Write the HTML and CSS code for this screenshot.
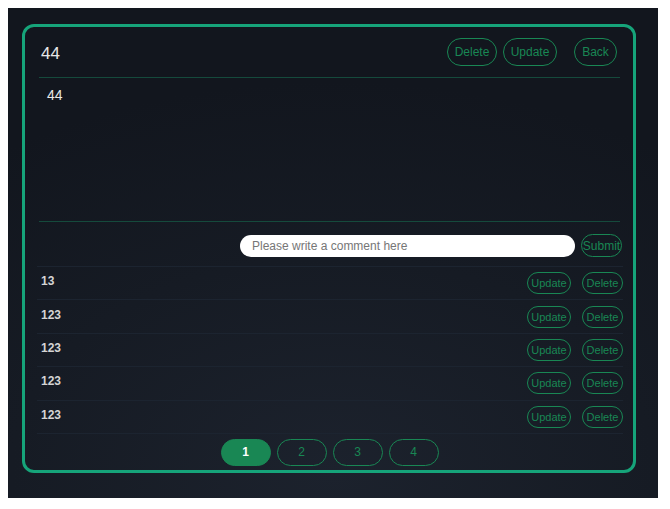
FILE: index.html
```html
<!DOCTYPE html>
<html>
<head>
<meta charset="utf-8">
<link rel="stylesheet" href="styles.css">
</head>
<body>
<div class="page">
  <div class="card">
    <div class="header">
      <h1 class="title">44</h1>
      <div class="actions">
        <button class="btn btn-delete">Delete</button>
        <button class="btn btn-update">Update</button>
        <button class="btn btn-back">Back</button>
      </div>
    </div>
    <div class="content">44</div>
    <form class="comment-form">
      <input class="comment-input" type="text" placeholder="Please write a comment here">
      <button type="button" class="btn btn-submit">Submit</button>
    </form>
    <ul class="comments">
      <li class="comment"><span class="comment-text">13</span><span class="row-actions"><button class="btn btn-sm btn-upd">Update</button><button class="btn btn-sm btn-del">Delete</button></span></li>
      <li class="comment"><span class="comment-text">123</span><span class="row-actions"><button class="btn btn-sm btn-upd">Update</button><button class="btn btn-sm btn-del">Delete</button></span></li>
      <li class="comment"><span class="comment-text">123</span><span class="row-actions"><button class="btn btn-sm btn-upd">Update</button><button class="btn btn-sm btn-del">Delete</button></span></li>
      <li class="comment"><span class="comment-text">123</span><span class="row-actions"><button class="btn btn-sm btn-upd">Update</button><button class="btn btn-sm btn-del">Delete</button></span></li>
      <li class="comment"><span class="comment-text">123</span><span class="row-actions"><button class="btn btn-sm btn-upd">Update</button><button class="btn btn-sm btn-del">Delete</button></span></li>
    </ul>
    <div class="pagination">
      <button class="page-btn active">1</button>
      <button class="page-btn">2</button>
      <button class="page-btn">3</button>
      <button class="page-btn">4</button>
    </div>
  </div>
</div>
</body>
</html>
```
FILE: styles.css
```css
html, body {
  margin: 0;
  padding: 0;
  background: #ffffff;
}
body {
  padding: 8px;
  font-family: "Liberation Sans", Arial, sans-serif;
}
.page {
  width: 650px;
  height: 490px;
  box-sizing: border-box;
  padding: 16px 0 0 14px;
  background: radial-gradient(ellipse 90% 80% at 50% 95%, #1c222d 0%, #161b24 55%, #12161e 100%);
}
.card {
  width: 614px;
  box-sizing: border-box;
  border: 3px solid #16a47a;
  border-radius: 12px;
  padding: 11px 13px 4px 14px;
}
.header {
  display: flex;
  justify-content: space-between;
  align-items: center;
  height: 28px;
  padding-bottom: 11px;
  border-bottom: 1px solid #154a3c;
}
.title {
  margin: 3px 0 0 2px;
  font-size: 17px;
  font-weight: normal;
  color: #e8e8e8;
}
.actions {
  display: flex;
  align-items: center;
  margin-right: 3px;
}
.btn {
  font-family: "Liberation Sans", Arial, sans-serif;
  background: transparent;
  border: 1px solid #198754;
  color: #198754;
  font-size: 12px;
  border-radius: 14px;
  padding: 0;
  cursor: pointer;
}
.btn-delete { width: 50px; height: 28px; }
.btn-update { width: 54px; height: 28px; margin-left: 6px; }
.btn-back { width: 43px; height: 28px; margin-left: 17px; }
.content {
  height: 144px;
  box-sizing: border-box;
  padding: 9px 0 0 8px;
  font-size: 14px;
  color: #e8e8e8;
  border-bottom: 1px solid #154a3c;
}
.comment-form {
  display: flex;
  justify-content: flex-end;
  align-items: center;
  margin: 12px -2px 0 0;
  height: 23px;
}
.comment-input {
  width: 335px;
  height: 22px;
  box-sizing: border-box;
  border: none;
  border-radius: 11px;
  background: #ffffff;
  padding: 0 12px;
  font-family: "Liberation Sans", Arial, sans-serif;
  font-size: 12px;
  color: #333;
  outline: none;
}
.comment-input::placeholder { color: #767676; }
.btn-submit {
  width: 41px;
  height: 23px;
  margin-left: 6px;
  border-radius: 12px;
}
.comments {
  list-style: none;
  margin: 9px -3px 0 -2px;
  padding: 0;
  border-bottom: 1px solid #1c2430;
}
.comment {
  display: flex;
  justify-content: space-between;
  align-items: center;
  height: 33.4px;
  box-sizing: border-box;
  border-top: 1px solid #1c2430;
  padding-left: 4px;
}
.comment-text {
  font-size: 12px;
  font-weight: bold;
  color: #d4d4d4;
  margin-bottom: 4px;
}
.row-actions {
  display: flex;
  align-items: center;
}
.btn-sm {
  height: 22px;
  font-size: 11px;
  border-radius: 11px;
}
.btn-upd { width: 44px; }
.btn-del { width: 41px; margin-left: 11px; }
.pagination {
  display: flex;
  justify-content: center;
  gap: 6px;
  margin-top: 5px;
}
.page-btn {
  width: 50px;
  height: 27px;
  border-radius: 14px;
  border: 1px solid #198754;
  background: transparent;
  color: #198754;
  font-family: "Liberation Sans", Arial, sans-serif;
  font-size: 12px;
  font-weight: normal;
  padding: 0;
}
.page-btn.active {
  background: #198754;
  color: #ffffff;
  font-weight: bold;
}
```
